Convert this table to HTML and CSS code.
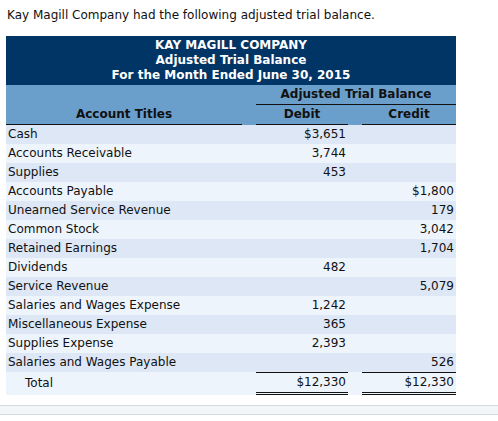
FILE: index.html
```html
<!DOCTYPE html>
<html lang="en">
<head>
  <meta charset="UTF-8">
  <title>Adjusted Trial Balance</title>
  <link rel="stylesheet" href="styles.css">
</head>
<body>

  <p class="intro">Kay Magill Company had the following adjusted trial balance.</p>

  <table class="trial">
    <colgroup>
      <col class="c-title">
      <col class="c-num">
      <col class="c-num2">
    </colgroup>
    <thead>
      <tr class="heading">
        <th colspan="3">KAY MAGILL COMPANY<br>Adjusted Trial Balance<br>For the Month Ended June 30, 2015</th>
      </tr>
      <tr class="group">
        <th></th>
        <th colspan="2" class="num"><div class="rule">Adjusted Trial Balance</div></th>
      </tr>
      <tr class="cols">
        <th><div class="rule">Account Titles</div></th>
        <th class="num"><div class="rule">Debit</div></th>
        <th class="num"><div class="rule">Credit</div></th>
      </tr>
    </thead>
    <tbody>
      <tr><td>Cash</td><td class="num"><div>$3,651</div></td><td class="num"><div></div></td></tr>
      <tr><td>Accounts Receivable</td><td class="num"><div>3,744</div></td><td class="num"><div></div></td></tr>
      <tr><td>Supplies</td><td class="num"><div>453</div></td><td class="num"><div></div></td></tr>
      <tr><td>Accounts Payable</td><td class="num"><div></div></td><td class="num"><div>$1,800</div></td></tr>
      <tr><td>Unearned Service Revenue</td><td class="num"><div></div></td><td class="num"><div>179</div></td></tr>
      <tr><td>Common Stock</td><td class="num"><div></div></td><td class="num"><div>3,042</div></td></tr>
      <tr><td>Retained Earnings</td><td class="num"><div></div></td><td class="num"><div>1,704</div></td></tr>
      <tr><td>Dividends</td><td class="num"><div>482</div></td><td class="num"><div></div></td></tr>
      <tr><td>Service Revenue</td><td class="num"><div></div></td><td class="num"><div>5,079</div></td></tr>
      <tr><td>Salaries and Wages Expense</td><td class="num"><div>1,242</div></td><td class="num"><div></div></td></tr>
      <tr><td>Miscellaneous Expense</td><td class="num"><div>365</div></td><td class="num"><div></div></td></tr>
      <tr><td>Supplies Expense</td><td class="num"><div>2,393</div></td><td class="num"><div></div></td></tr>
      <tr><td>Salaries and Wages Payable</td><td class="num"><div></div></td><td class="num"><div>526</div></td></tr>
      <tr class="total"><td class="indent">Total</td><td class="num"><div>$12,330</div></td><td class="num"><div>$12,330</div></td></tr>
    </tbody>
  </table>

  <div class="band"></div>

</body>
</html>
```

FILE: styles.css
```css
body {
  margin: 0;
  padding: 8px 0 0 0;
  font-family: "DejaVu Sans", Verdana, sans-serif;
  font-size: 12px;
  color: #111;
  background: #fff;
}

.intro {
  margin: 0 0 14px 7px;
  line-height: 14px;
}

.trial {
  margin-left: 6px;
  width: 450px;
  border-collapse: collapse;
  border-spacing: 0;
  table-layout: fixed;
}

.c-title { width: 236px; }
.c-num { width: 106px; }
.c-num2 { width: 108px; }

.trial th,
.trial td {
  padding: 0;
  line-height: 19px;
  height: 19px;
}

/* dark title block */
.heading th {
  background: #013566;
  color: #fff;
  font-weight: bold;
  text-align: center;
  line-height: 15px;
  padding: 2px 0 2px;
}

.group th,
.cols th {
  background: #6a9ecb;
  color: #111;
  font-weight: bold;
  text-align: center;
}

.group th.num,
.cols th.num {
  padding-left: 14px;
}

.rule {
  border-bottom: 1px solid #111;
}

.trial td {
  padding-left: 2px;
}

.trial td.num {
  padding-left: 14px;
  text-align: right;
}

.trial td.num div {
  padding-right: 2px;
}

.trial tbody tr:nth-child(odd) { background: #dde7f6; }
.trial tbody tr:nth-child(even) { background: #eef4fc; }

.total td {
  height: 23px;
  line-height: 19px;
  vertical-align: top;
}

.total td.indent {
  padding-left: 19px;
  line-height: 22px;
}

.total td.num div {
  border-top: 1px solid #111;
  border-bottom: 3px double #111;
  line-height: 19px;
}

.band {
  margin-top: 10px;
  height: 8px;
  border-top: 1px solid #d3d9e0;
  border-bottom: 1px solid #d3d9e0;
  background: #f3f6f9;
}
```
